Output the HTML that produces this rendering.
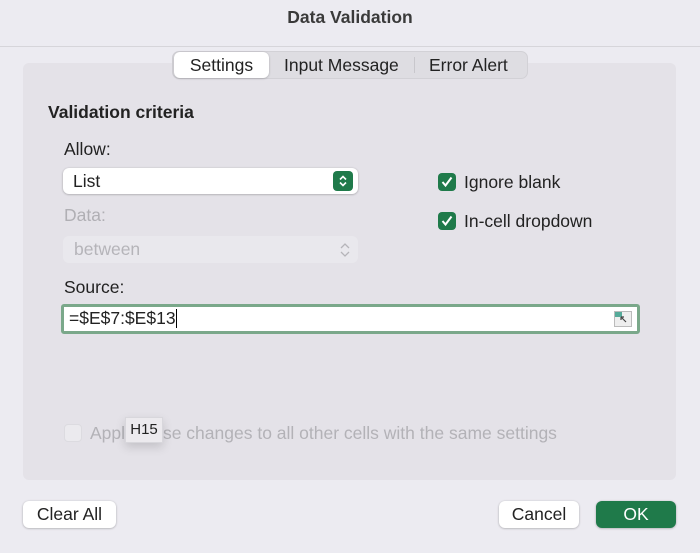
<!DOCTYPE html>
<html><head><style>
*{box-sizing:border-box;margin:0;padding:0}
body{width:700px;height:553px;background:#ecebf1;font-family:"Liberation Sans",sans-serif;color:#222;position:relative;overflow:hidden;font-size:17.5px}
.a{position:absolute}
.title{left:0;top:0;width:700px;height:47px;border-bottom:1px solid #d6d5da;text-align:center;line-height:34px;font-weight:bold;font-size:17.5px;color:#3a3a3a}
.panel{left:23px;top:63px;width:653px;height:417px;background:#e4e2e8;border-radius:6px}
.seg{left:172px;top:51px;width:356px;height:28px;background:#dedde2;border-radius:7px;border:1px solid #d2d1d6}
.seg div{position:absolute;top:0;height:26px;line-height:26px;font-size:17.5px}
.btn{background:#fff;border-radius:6px;box-shadow:0 0.5px 2px rgba(0,0,0,.3);text-align:center;line-height:27px;font-size:17.5px}
.cb{width:18px;height:18px;border-radius:4px;background:#1f7a4a}
.cb svg{display:block}
</style></head><body>
<div class="a title">Data Validation</div>
<div class="a panel"></div>
<div class="a seg">
 <div style="left:1px;width:95px;background:#fff;border-radius:6px;box-shadow:0 0.5px 2px rgba(0,0,0,.25);text-align:center">Settings</div>
 <div style="left:111px">Input Message</div>
 <div style="left:241px;top:5px;height:16px;width:1px;background:#c8c7cc"></div>
 <div style="left:256px">Error Alert</div>
</div>
<div class="a" style="left:48px;top:102px;font-weight:bold;font-size:17.5px">Validation criteria</div>
<div class="a" style="left:64px;top:139px">Allow:</div>
<div class="a btn" style="left:63px;top:168px;width:295px;height:26px;text-align:left;padding-left:10px;line-height:26px">List</div>
<div class="a" style="left:333px;top:171px;width:20px;height:20px;background:#1f7a4a;border-radius:4px"><svg width="20" height="20"><path d="M7 8.5l3-3 3 3M7 11.5l3 3 3-3" stroke="#fff" stroke-width="1.6" fill="none"/></svg></div>
<div class="a" style="left:64px;top:205px;color:#b0afb4">Data:</div>
<div class="a" style="left:63px;top:236px;width:295px;height:27px;background:#e9e8ed;border-radius:6px;color:#b5b4b9;padding-left:11px;line-height:27px">between</div>
<div class="a" style="left:338px;top:240px"><svg width="14" height="20"><path d="M3 8l4-4 4 4M3 12l4 4 4-4" stroke="#b5b4b9" stroke-width="1.3" fill="none"/></svg></div>
<div class="a cb" style="left:438px;top:173px"><svg width="18" height="18"><path d="M4.5 9l3 3.5 6-8" stroke="#fff" stroke-width="2" fill="none"/></svg></div>
<div class="a" style="left:464px;top:172px">Ignore blank</div>
<div class="a cb" style="left:438px;top:212px"><svg width="18" height="18"><path d="M4.5 9l3 3.5 6-8" stroke="#fff" stroke-width="2" fill="none"/></svg></div>
<div class="a" style="left:464px;top:211px">In-cell dropdown</div>
<div class="a" style="left:64px;top:277px">Source:</div>
<div class="a" style="left:61px;top:304px;width:579px;height:30px;border:3px solid #7aa88a;border-radius:3px;background:#fff;padding-left:5px;line-height:23px;font-size:17.5px">=$E$7:$E$13<span style="display:inline-block;width:1px;height:19px;background:#000;vertical-align:-4px"></span></div>
<div class="a" style="left:614px;top:311px;width:18px;height:16px;background:#eee;border:1px solid #bbb"><div class="a" style="left:0;top:0;width:7px;height:5px;background:#5a9;"></div><svg class="a" width="16" height="14"><path d="M6 5l5 5M6 5v3M6 5h3" stroke="#444" stroke-width="1.2" fill="none"/></svg></div>
<div class="a" style="left:64px;top:424px;width:18px;height:18px;border-radius:4px;background:#ebeaee;border:1px solid #dcdbe0"></div>
<div class="a" style="left:90px;top:423px;color:#b3b2b7">Apply these changes to all other cells with the same settings</div>
<div class="a" style="left:125px;top:417px;width:38px;height:26px;background:#eceaee;border:1px solid #d8d7dc;box-shadow:0 4px 10px rgba(0,0,0,.15);font-size:15px;line-height:24px;text-align:center">H15</div>
<div class="a btn" style="left:23px;top:501px;width:93px;height:27px">Clear All</div>
<div class="a btn" style="left:499px;top:501px;width:80px;height:27px">Cancel</div>
<div class="a btn" style="left:596px;top:501px;width:80px;height:27px;background:#1f7a4a;color:#fff">OK</div>
</body></html>
